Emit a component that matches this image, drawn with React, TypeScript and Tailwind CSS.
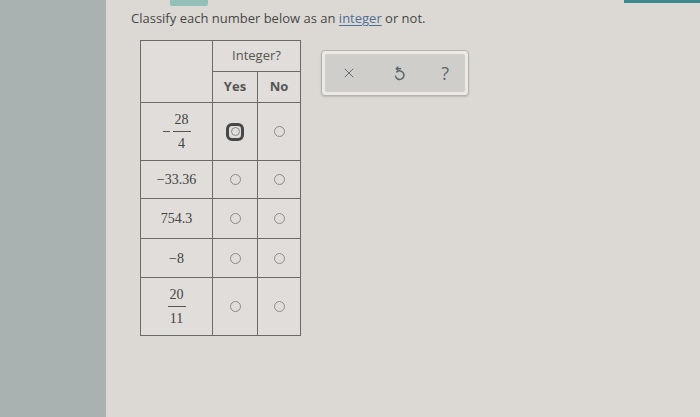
import { X } from "lucide-react";

function Radio({ selected = false }: { selected?: boolean }) {
  if (selected) {
    return (
      <div className="w-[18px] h-[18px] rounded-[6px] border-[3px] border-[#474747] flex items-center justify-center">
        <div className="w-[9px] h-[9px] rounded-full border border-[#8a8a8a]" />
      </div>
    );
  }
  return <div className="w-[11px] h-[11px] rounded-full border border-[#8c8c8c]" />;
}

function Fraction({ num, den, neg = false }: { num: string; den: string; neg?: boolean }) {
  return (
    <div className="flex items-center justify-center gap-[3px]">
      {neg && <span className="w-[7px] h-[1px] bg-[#555]" />}
      <div className="flex flex-col items-center">
        <span className="leading-[17px]">{num}</span>
        <span className="w-[18px] h-[1px] bg-[#555] my-[3px]" />
        <span className="leading-[17px]">{den}</span>
      </div>
    </div>
  );
}

const rows = [
  { label: <Fraction num="28" den="4" neg />, h: "h-[58px]", yes: true },
  { label: <span>−33.36</span>, h: "h-[38px]" },
  { label: <span>754.3</span>, h: "h-[40px]" },
  { label: <span>−8</span>, h: "h-[39px]" },
  { label: <Fraction num="20" den="11" />, h: "h-[58px]" },
];

function UndoIcon() {
  return (
    <svg width="15" height="15" viewBox="0 0 14 14" fill="none" stroke="#5d6670" strokeWidth="1.4" strokeLinecap="round" strokeLinejoin="round">
      <path d="M4.5 2.5 H8" />
      <path d="M5.5 1 L4 2.5 L5.5 4" />
      <path d="M4.5 5.5 A4 4 0 1 1 3.2 9.5" />
    </svg>
  );
}

export default function App() {
  return (
    <div className="w-[700px] h-[417px] flex overflow-hidden font-['Open_Sans',sans-serif]">
      <div className="w-[106px] bg-[#a9b2b0]" />

      <div className="flex-1 bg-[#dcd9d5] flex flex-col">
        <div className="h-[6px] flex">
          <div className="ml-[64px] w-[38px] h-[6px] bg-[#93c1b7] rounded-b-[2px]" />
          <div className="ml-auto w-[76px] h-[3px] bg-[#3d8b90]" />
        </div>

        <p className="ml-[25px] mt-[3px] text-[13px] text-[#474747] leading-[18px]">
          Classify each number below as an{" "}
          <span className="text-[#4f6f95] underline underline-offset-2">integer</span> or not.
        </p>

        <div className="flex items-start mt-[13px] ml-[34px] gap-[20px]">
          <table className="border-collapse border border-[#6a6a6a] bg-[#e0ddda] text-[#444]">
            <tbody>
              <tr className="h-[31px]">
                <td rowSpan={2} className="w-[72px] border border-[#6a6a6a]" />
                <td colSpan={2} className="border border-[#6a6a6a] text-center text-[13px] text-[#555]">
                  Integer?
                </td>
              </tr>
              <tr className="h-[31px] text-[13px] font-bold text-[#555]">
                <td className="w-[45px] border border-[#6a6a6a] text-center">Yes</td>
                <td className="w-[43px] border border-[#6a6a6a] text-center">No</td>
              </tr>
              {rows.map((r, i) => (
                <tr key={i} className={r.h}>
                  <td className="border border-[#6a6a6a] text-center text-[14px] font-['Liberation_Serif',serif]">
                    <div className="flex justify-center">{r.label}</div>
                  </td>
                  <td className="border border-[#6a6a6a]">
                    <div className="flex justify-center">
                      <Radio selected={r.yes} />
                    </div>
                  </td>
                  <td className="border border-[#6a6a6a]">
                    <div className="flex justify-center">
                      <Radio />
                    </div>
                  </td>
                </tr>
              ))}
            </tbody>
          </table>

          <div className="mt-[10px] w-[148px] h-[46px] rounded-[4px] border border-[#b5b3b0] bg-[#ebe8e5] p-[3px] shadow-[0_1px_2px_rgba(0,0,0,0.15)]">
            <div className="h-full rounded-[2px] bg-[#d0cecb] flex items-center justify-between px-[16px]">
              <X size={16} strokeWidth={1.4} color="#5d6670" />
              <UndoIcon />
              <span className="text-[18px] text-[#5d6670] leading-none">?</span>
            </div>
          </div>
        </div>
      </div>
    </div>
  );
}
